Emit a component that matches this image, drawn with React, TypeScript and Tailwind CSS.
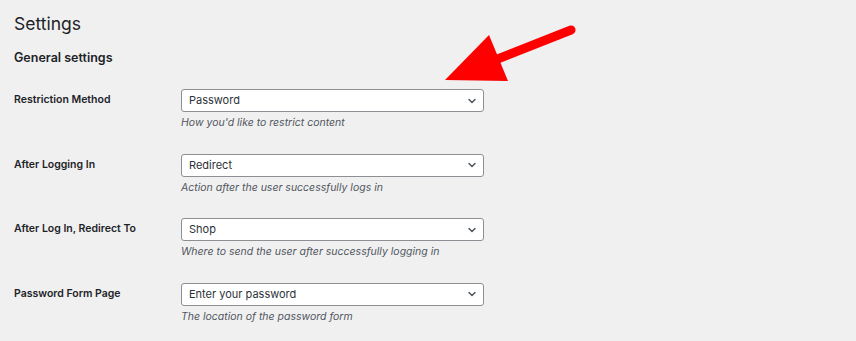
import React from "react";

const rows = [
  { label: "Restriction Method", value: "Password", help: "How you'd like to restrict content" },
  { label: "After Logging In", value: "Redirect", help: "Action after the user successfully logs in" },
  { label: "After Log In, Redirect To", value: "Shop", help: "Where to send the user after successfully logging in" },
  { label: "Password Form Page", value: "Enter your password", help: "The location of the password form" },
];

function Chevron() {
  return (
    <svg width="10" height="10" viewBox="0 0 10 10" className="shrink-0">
      <path d="M2 3.5 L5 6.5 L8 3.5" fill="none" stroke="#50575e" strokeWidth="1.5" strokeLinecap="round" strokeLinejoin="round" />
    </svg>
  );
}

function SelectBox({ value }: { value: string }) {
  return (
    <div className="flex h-[23px] w-[303px] items-center justify-between rounded-[3px] border border-[#8c8f94] bg-white pl-[7px] pr-[6px] text-[11px] text-[#2c3338]">
      <span>{value}</span>
      <Chevron />
    </div>
  );
}

export default function App() {
  return (
    <div
      className="relative h-[341px] w-full overflow-hidden bg-[#f0f0f1] pl-[14px] text-[#1d2327]"
      style={{ fontFamily: "Inter, 'Open Sans', 'Liberation Sans', sans-serif" }}
    >
      <h1 className="pt-[12px] text-[17.5px] font-normal leading-[24px]">Settings</h1>
      <h2 className="mt-[13px] text-[12.5px] font-semibold leading-[18px]">General settings</h2>

      <div className="mt-[22px] flex flex-col">
        {rows.map((r) => (
          <div key={r.label} className="flex h-[64.6px]">
            <div className="w-[167px] pt-[4px] text-[10.5px] font-semibold leading-[14px]">{r.label}</div>
            <div className="flex flex-col">
              <SelectBox value={r.value} />
              <p className="mt-[4px] text-[10.5px] italic leading-[14px] text-[#50575e]">{r.help}</p>
            </div>
          </div>
        ))}
      </div>

      {/* red annotation arrow */}
      <svg className="absolute left-[420px] top-0" width="200" height="110" viewBox="0 0 200 110">
        <line x1="70" y1="62" x2="151" y2="30" stroke="#ff0000" strokeWidth="9" strokeLinecap="round" />
        <polygon points="25,80 69,35 88,81" fill="#ff0000" />
      </svg>
    </div>
  );
}
